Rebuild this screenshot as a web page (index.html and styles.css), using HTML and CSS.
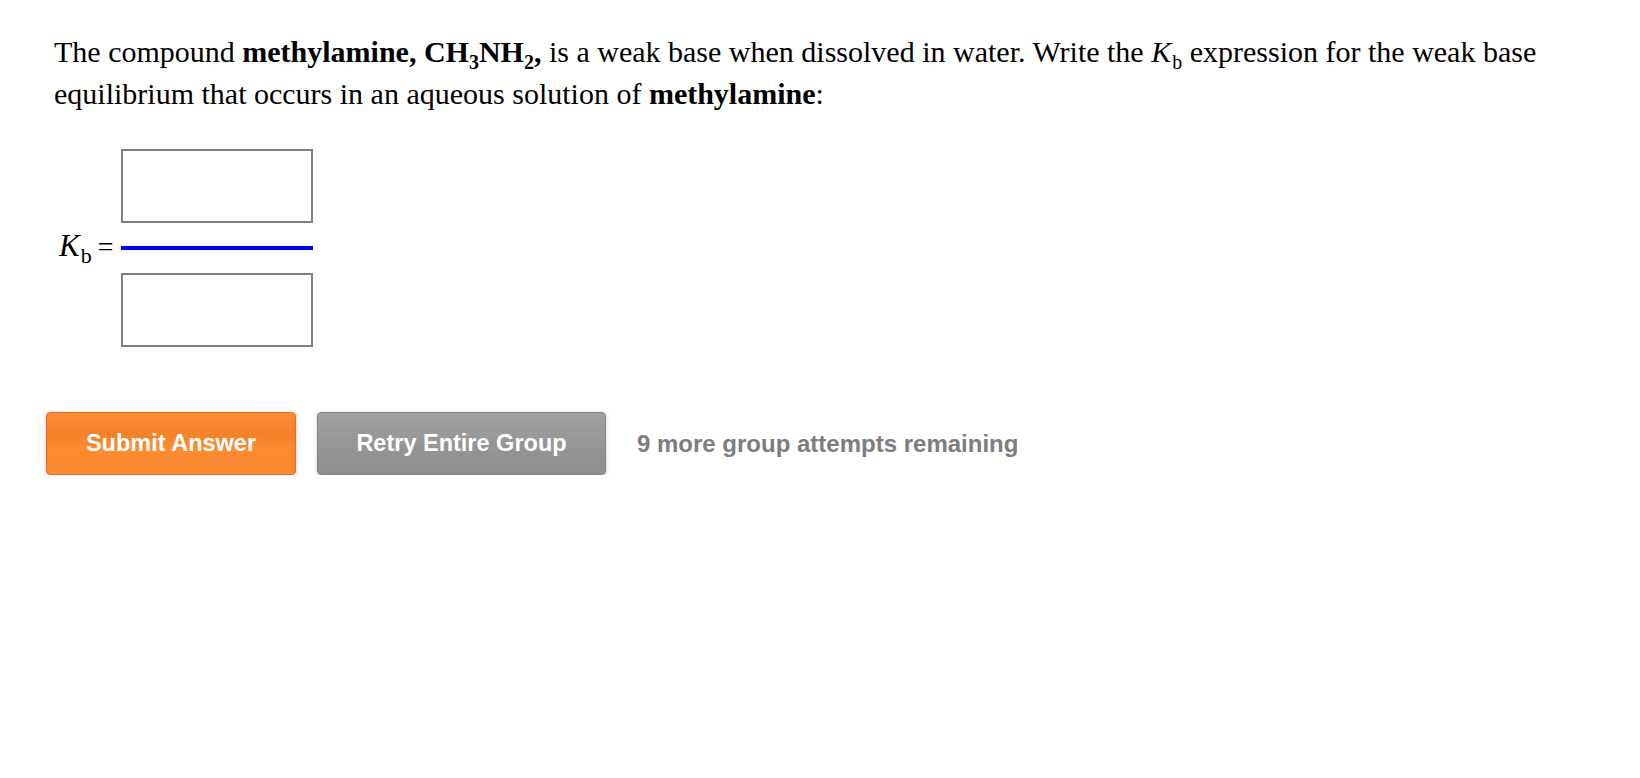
FILE: index.html
```html
<!DOCTYPE html>
<html lang="en">
<head>
    <meta charset="UTF-8">
    <title>Weak Base Equilibrium</title>
    <link rel="stylesheet" href="styles.css">
</head>
<body>
    <div class="question">
        <p class="prompt">
            The compound <b>methylamine, CH<sub>3</sub>NH<sub>2</sub>,</b> is a weak base when dissolved in water. Write the <i>K</i><sub class="sb">b</sub> expression for the weak base equilibrium that occurs in an aqueous solution of <b>methylamine</b>:
        </p>

        <div class="expr">
            <span class="lbl"><i>K</i><span class="lsub">b</span><span class="eq">=</span></span>
            <div class="frac">
                <div class="box"></div>
                <div class="bar"></div>
                <div class="box"></div>
            </div>
        </div>

        <div class="actions">
            <button class="btn submit">Submit Answer</button>
            <button class="btn retry">Retry Entire Group</button>
            <span class="left">9 more group attempts remaining</span>
        </div>
    </div>
</body>
</html>
```

FILE: styles.css
```css
html, body {
    margin: 0;
    padding: 0;
    background: #fff;
}

.question {
    padding: 31px 0 0 54px;
}

.prompt {
    margin: 0;
    width: 1520px;
    font-family: "Liberation Serif", "Times New Roman", serif;
    font-size: 30px;
    line-height: 42px;
    color: #000;
}
.prompt sub {
    font-size: 20px;
    line-height: 0;
    vertical-align: -7px;
}
.prompt .sb {
    margin-left: 1px;
}

.expr {
    display: flex;
    align-items: center;
    margin-top: 34px;
}
.lbl {
    width: 62px;
    margin-left: 5px;
    font-family: "Liberation Serif", "Times New Roman", serif;
    font-size: 31px;
    color: #000;
    white-space: nowrap;
}
.lsub {
    font-size: 22px;
    vertical-align: -7px;
    margin-left: 1px;
}
.eq {
    margin-left: 6px;
    font-size: 28px;
}

.frac {
    display: flex;
    flex-direction: column;
    gap: 23px;
}
.box {
    width: 188px;
    height: 70px;
    border: 2px solid #808080;
    background: #fff;
}
.bar {
    height: 4px;
    width: 192px;
    background: #0000ee;
}

.actions {
    display: flex;
    align-items: center;
    margin: 65px 0 0 -8px;
}
.btn {
    height: 63px;
    padding: 0;
    border-radius: 4px;
    font-family: "Liberation Sans", Arial, sans-serif;
    font-weight: bold;
    font-size: 23.5px;
    color: #fff;
    box-shadow: 0 1px 4px rgba(0, 0, 0, 0.18);
    cursor: pointer;
}
.submit {
    width: 250px;
    border: 1px solid #f2651c;
    background: linear-gradient(#fd8d36 0%, #f2832b 35%, #fd8b31 60%, #fd8a30 100%);
}
.retry {
    width: 289px;
    margin-left: 21px;
    border: 1px solid #858585;
    background: linear-gradient(#a2a2a2 0%, #989898 40%, #929292 70%, #8e8e8e 100%);
}
.left {
    margin-left: 31px;
    font-family: "Liberation Sans", Arial, sans-serif;
    font-weight: bold;
    font-size: 24px;
    color: #7d7d7d;
}
```
